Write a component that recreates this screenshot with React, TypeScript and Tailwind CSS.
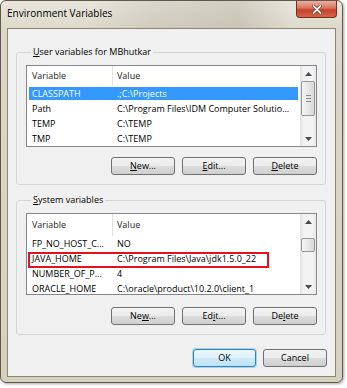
import type { ReactNode } from "react";

type Row = { name: string; value: string; selected?: boolean; marked?: boolean };

const userRows: Row[] = [
  { name: "CLASSPATH", value: ".;C:\\Projects", selected: true },
  { name: "Path", value: "C:\\Program Files\\IDM Computer Solutio..." },
  { name: "TEMP", value: "C:\\TEMP" },
  { name: "TMP", value: "C:\\TEMP" },
];

const systemRows: Row[] = [
  { name: "FP_NO_HOST_C...", value: "NO" },
  { name: "JAVA_HOME", value: "C:\\Program Files\\Java\\jdk1.5.0_22", marked: true },
  { name: "NUMBER_OF_P...", value: "4" },
  { name: "ORACLE_HOME", value: "C:\\oracle\\product\\10.2.0\\client_1" },
];

function Arrow({ down }: { down?: boolean }) {
  return (
    <div className="flex h-[15px] items-center justify-center">
      <svg width="7" height="4" viewBox="0 0 7 4">
        <path d={down ? "M0 0h7L3.5 4z" : "M0 4h7L3.5 0z"} fill="#4a4a4a" />
      </svg>
    </div>
  );
}

function ScrollBar({ big }: { big?: boolean }) {
  return (
    <div className="flex w-[16px] flex-col bg-[linear-gradient(90deg,#e2e2e2,#f3f3f3_25%,#f3f3f3_75%,#e6e6e6)]">
      <Arrow />
      <div className="flex-1">
        {big ? (
          <div className="mx-[1px] flex h-[35px] flex-col items-center justify-center gap-[2px] rounded-[2px] border border-[#959595] bg-[linear-gradient(90deg,#f4f4f4,#e8e8e8_50%,#d8d8d8)]">
            <div className="h-px w-[5px] bg-[#8a8a8a]" />
            <div className="h-px w-[5px] bg-[#8a8a8a]" />
            <div className="h-px w-[5px] bg-[#8a8a8a]" />
          </div>
        ) : (
          <div className="mx-[1px] mt-[9px] h-[14px] rounded-[2px] border border-[#959595] bg-[linear-gradient(90deg,#f4f4f4,#e8e8e8_50%,#d8d8d8)]" />
        )}
      </div>
      <Arrow down />
    </div>
  );
}

function VarList({ rows, headerH, big }: { rows: Row[]; headerH: string; big?: boolean }) {
  return (
    <div className="flex h-[82px] overflow-hidden border border-[#828790] bg-white">
      <div className="flex flex-1 flex-col">
        <div className={`flex shrink-0 items-center text-[#1e1e1e] ${headerH}`}>
          <div className="flex h-full w-[86px] items-center border-r border-[#e3e3e3] pl-[5px]">Variable</div>
          <div className="pl-[4px]">Value</div>
        </div>
        {rows.map((r) => (
          <div key={r.name} className="relative h-[15px] shrink-0 px-[2px] py-px">
            <div className={`flex h-full items-center ${r.selected ? "bg-[#3399ff] text-white" : "text-black"}`}>
              <div className="w-[86px] shrink-0 whitespace-nowrap pl-[3px]">{r.name}</div>
              <div className="whitespace-nowrap pl-[2px]">{r.value}</div>
            </div>
            {r.marked ? (
              <div className="absolute left-px top-[1px] h-[16px] w-[241px] border-2 border-[#e3121c]" />
            ) : null}
          </div>
        ))}
      </div>
      <ScrollBar big={big} />
    </div>
  );
}

function Btn({ children, primary }: { children: ReactNode; primary?: boolean }) {
  return (
    <div
      className={
        primary
          ? "flex h-[18px] w-[63px] items-center justify-center rounded-[3px] border border-[#3c7fb1] bg-[linear-gradient(#eaf6fd,#dff2fc_50%,#cdeafa_50%,#bfe2f7)] shadow-[0_0_0_1px_#9fd5f5] text-black"
          : "flex h-[18px] w-[64px] items-center justify-center rounded-[3px] border border-[#707070] bg-[linear-gradient(#f3f3f3,#ebebeb_50%,#dddddd_50%,#cfcfcf)] text-black"
      }
    >
      {children}
    </div>
  );
}

function Group({ legend, children }: { legend: ReactNode; children: ReactNode }) {
  return (
    <fieldset className="ml-[8px] mr-[9px] rounded-[3px] border border-[#d5d5d5] pb-[9px] pl-[9px] pr-[8px]">
      <legend className="ml-[5px] px-[2px] leading-[14px] text-black">{legend}</legend>
      {children}
    </fieldset>
  );
}

export default function App() {
  return (
    <div className="h-[388px] w-[347px] bg-white font-['Open_Sans',sans-serif] text-[9px]">
      <div className="flex h-[383px] w-[343px] flex-col rounded-[6px] border border-[#5f5a48] bg-[linear-gradient(180deg,#e8e6de,#dcd8c9_30px,#d5d1bf)] shadow-[1px_1px_3px_rgba(0,0,0,0.35)]">
        <div className="flex h-[27px] shrink-0 items-start justify-between bg-[linear-gradient(90deg,transparent_25%,rgba(110,100,80,0.12)_45%,rgba(110,100,80,0.18)_70%,transparent_85%)]">
          <span className="ml-[6px] mt-[5px] text-[10px] text-black">Environment Variables</span>
          <div className="mr-[5px] flex h-[17px] w-[41px] items-center justify-center rounded-b-[4px] border border-t-0 border-[#7a2e20] bg-[linear-gradient(#eab0a2,#d9725c_45%,#c6412a_55%,#d4644c)]">
            <svg width="10" height="9" viewBox="0 0 10 9">
              <path d="M1.5 1l7 7M8.5 1l-7 7" stroke="#5a1a10" strokeWidth="3" strokeLinecap="round" />
              <path d="M1.5 1l7 7M8.5 1l-7 7" stroke="#ffffff" strokeWidth="1.8" strokeLinecap="round" />
            </svg>
          </div>
        </div>
        <div className="mx-[6px] mb-[5px] flex flex-1 flex-col border border-[#8d8771] bg-[#f0f0f0] pt-[16px]">
          <Group
            legend={
              <>
                <span className="underline">U</span>ser variables for MBhutkar
              </>
            }
          >
            <div className="pt-[6px]">
              <VarList rows={userRows} headerH="h-[20px]" big />
            </div>
            <div className="mt-[10px] flex justify-end gap-[7px]">
              <Btn>
                <span className="underline">N</span>ew...
              </Btn>
              <Btn>
                <span className="underline">E</span>dit...
              </Btn>
              <Btn>
                <span className="underline">D</span>elete
              </Btn>
            </div>
          </Group>
          <div className="mt-[8px]">
            <Group
              legend={
                <>
                  <span className="underline">S</span>ystem variables
                </>
              }
            >
              <div className="pt-[6px]">
                <VarList rows={systemRows} headerH="h-[22px]" />
              </div>
              <div className="mt-[12px] flex justify-end gap-[7px]">
                <Btn>
                  Ne<span className="underline">w</span>...
                </Btn>
                <Btn>
                  Ed<span className="underline">i</span>t...
                </Btn>
                <Btn>
                  De<span className="underline">l</span>ete
                </Btn>
              </div>
            </Group>
          </div>
          <div className="mt-[14px] flex justify-end gap-[7px] pr-[8px]">
            <Btn primary>OK</Btn>
            <Btn>Cancel</Btn>
          </div>
        </div>
      </div>
    </div>
  );
}
